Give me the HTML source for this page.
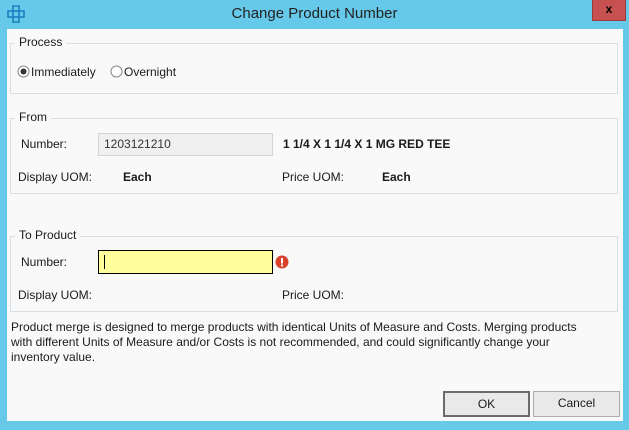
<!DOCTYPE html>
<html><head><meta charset="utf-8"><style>
*{margin:0;padding:0;box-sizing:border-box}
body{width:629px;height:430px;background:#66c9ea;position:relative;overflow:hidden;font-family:"Liberation Sans",sans-serif;font-size:12px;color:#1a1a1a}
.a{position:absolute;white-space:nowrap}
#content{position:absolute;left:7px;top:29px;width:616px;height:392px;background:#f9f9f9}
.grp{position:absolute;border:1px solid #d5dfe5}
.lg{position:absolute;background:#f9f9f9;padding:0 4px;top:-9px;left:4px;font-size:12px}
.b{font-weight:bold}
.btn{position:absolute;background:#e9e9e9;border:1px solid #adadad;text-align:center;line-height:23px}
</style></head><body>
<svg class="a" style="left:7px;top:5px" width="18" height="18" viewBox="0 0 18 18"><g fill="none" stroke="#1a7fc0" stroke-width="1.6"><path d="M6 1h6v5h5v6h-5v5h-6v-5h-5v-6h5z"/><rect x="6" y="6" width="6" height="6"/></g></svg>
<div class="a" style="left:0;width:629px;top:5px;text-align:center;font-size:15px;color:#222">Change Product Number</div>
<div class="a" style="left:592px;top:0;width:34px;height:21px;background:#c75050;border:1px solid #9b3b3b;border-top:none;color:#000;font-weight:bold;text-align:center;line-height:19px;font-size:12px">x</div>
<div id="content"></div>
<div class="grp" style="left:10px;top:43px;width:608px;height:51px"><div class="lg">Process</div></div>
<svg class="a" style="left:17px;top:65px" width="13" height="13"><circle cx="6.5" cy="6.5" r="5.5" fill="#fff" stroke="#888"/><circle cx="6.5" cy="6.5" r="3" fill="#333"/></svg>
<div class="a" style="left:31px;top:65px">Immediately</div>
<svg class="a" style="left:110px;top:65px" width="13" height="13"><circle cx="6.5" cy="6.5" r="5.5" fill="#fff" stroke="#888"/></svg>
<div class="a" style="left:124px;top:65px">Overnight</div>
<div class="grp" style="left:10px;top:118px;width:608px;height:76px"><div class="lg">From</div></div>
<div class="a" style="left:21px;top:137px">Number:</div>
<div class="a" style="left:98px;top:133px;width:175px;height:23px;background:#f0f0f0;border:1px solid #cdd5da;padding:3px 5px;color:#333">1203121210</div>
<div class="a b" style="left:283px;top:137px">1 1/4 X 1 1/4 X 1 MG RED TEE</div>
<div class="a" style="left:18px;top:170px">Display UOM:</div>
<div class="a b" style="left:123px;top:170px">Each</div>
<div class="a" style="left:282px;top:170px">Price UOM:</div>
<div class="a b" style="left:382px;top:170px">Each</div>
<div class="grp" style="left:10px;top:236px;width:608px;height:76px"><div class="lg">To Product</div></div>
<div class="a" style="left:21px;top:255px">Number:</div>
<div class="a" style="left:98px;top:250px;width:175px;height:24px;background:#ffff9e;border:1px solid #000"><div style="position:absolute;left:5px;top:4px;width:1px;height:14px;background:#000"></div></div>
<svg class="a" style="left:275px;top:255px" width="14" height="14"><circle cx="7" cy="7" r="6.5" fill="#d9412b"/><rect x="6" y="3" width="2" height="5.5" fill="#fff"/><rect x="6" y="9.5" width="2" height="2" fill="#fff"/></svg>
<div class="a" style="left:18px;top:288px">Display UOM:</div>
<div class="a" style="left:282px;top:288px">Price UOM:</div>
<div class="a" style="left:11px;top:320px;line-height:15px;white-space:normal;width:585px">Product merge is designed to merge products with identical Units of Measure and Costs. Merging products with different Units of Measure and/or Costs is not recommended, and could significantly change your inventory value.</div>
<div class="btn" style="left:443px;top:391px;width:87px;height:26px;border:2px solid #6b6b6b;line-height:22px">OK</div>
<div class="btn" style="left:533px;top:391px;width:87px;height:26px">Cancel</div>
</body></html>
